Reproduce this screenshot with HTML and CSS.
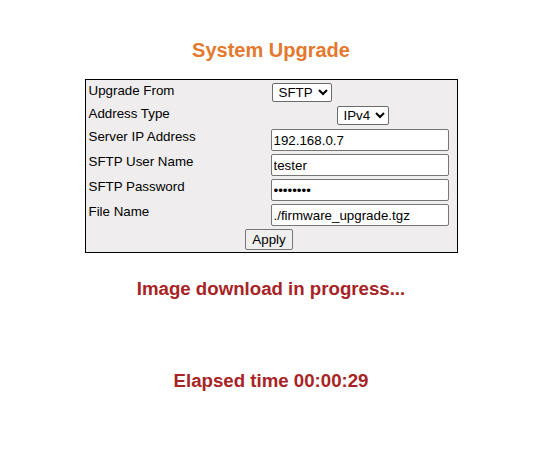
FILE: index.html
```html
<!DOCTYPE html>
<html>
<head>
<meta charset="utf-8">
<title>System Upgrade</title>
<link rel="stylesheet" href="styles.css">
</head>
<body>
<div class="page">
  <h1 class="title">System Upgrade</h1>
  <table class="form" cellspacing="2" cellpadding="0">
    <tr class="row-sel">
      <td class="label">Upgrade From</td>
      <td class="field"><select class="sel"><option>SFTP</option></select></td>
    </tr>
    <tr class="row-sel">
      <td class="label">Address Type</td>
      <td class="field center"><select class="sel"><option>IPv4</option></select></td>
    </tr>
    <tr class="row-txt">
      <td class="label">Server IP Address</td>
      <td class="field"><input class="txt" type="text" value="192.168.0.7"></td>
    </tr>
    <tr class="row-txt">
      <td class="label">SFTP User Name</td>
      <td class="field"><input class="txt" type="text" value="tester"></td>
    </tr>
    <tr class="row-txt">
      <td class="label">SFTP Password</td>
      <td class="field"><input class="txt" type="password" value="password"></td>
    </tr>
    <tr class="row-txt">
      <td class="label">File Name</td>
      <td class="field"><input class="txt" type="text" value="./firmware_upgrade.tgz"></td>
    </tr>
    <tr>
      <td colspan="2" class="center"><button class="btn">Apply</button></td>
    </tr>
  </table>
  <p class="status">Image download in progress...</p>
  <p class="elapsed">Elapsed time 00:00:29</p>
</div>
</body>
</html>
```

FILE: styles.css
```css
html, body {
  margin: 0;
  padding: 0;
  background: #ffffff;
}
body {
  font-family: "Liberation Sans", Arial, sans-serif;
  font-size: 13.33px;
  color: #000;
}
.page {
  width: 542px;
  padding-top: 38px;
  text-align: center;
}
.title {
  margin: 0 0 17px 0;
  font-size: 20px;
  font-weight: bold;
  color: #e4782d;
  line-height: 24px;
}
.form {
  margin: 0 auto;
  width: 373px;
  border: 1px solid #000;
  background: #efeded;
  text-align: left;
  border-collapse: separate;
}
.label {
  width: 178px;
  padding: 0 0 0 1px;
  vertical-align: top;
  line-height: 17px;
}
.row-sel .label {
  height: 21px;
}
.row-txt .label {
  height: 23px;
}
.field {
  padding: 0 1px 0 1px;
  vertical-align: top;
}
.center {
  text-align: center;
}
.sel {
  font-family: "Liberation Sans", Arial, sans-serif;
  font-size: 13.33px;
  height: 19px;
  margin: 1px 0 0 2px;
  padding: 0 1px 0 2px;
  border: 1px solid #6b6b6b;
  border-radius: 2px;
  background: #fff;
  color: #000;
}
.txt {
  box-sizing: border-box;
  width: 178px;
  height: 22px;
  margin: 1px 0 0 1px;
  padding: 1px 2px;
  font-family: "Liberation Sans", Arial, sans-serif;
  font-size: 13.33px;
  border: 1px solid #767676;
  border-radius: 2px;
  background: #fff;
  color: #000;
}
.btn {
  font-family: "Liberation Sans", Arial, sans-serif;
  font-size: 13.33px;
  height: 21px;
  margin: 1px 4px 0 0;
  padding: 0 6px;
  border: 1px solid #767676;
  border-radius: 2px;
  background: #efefef;
  color: #000;
}
.status {
  margin: 25px 0 0 0;
  font-size: 18.67px;
  font-weight: bold;
  color: #a82325;
}
.elapsed {
  margin: 70px 0 0 0;
  font-size: 18.67px;
  font-weight: bold;
  color: #a82325;
}
```
